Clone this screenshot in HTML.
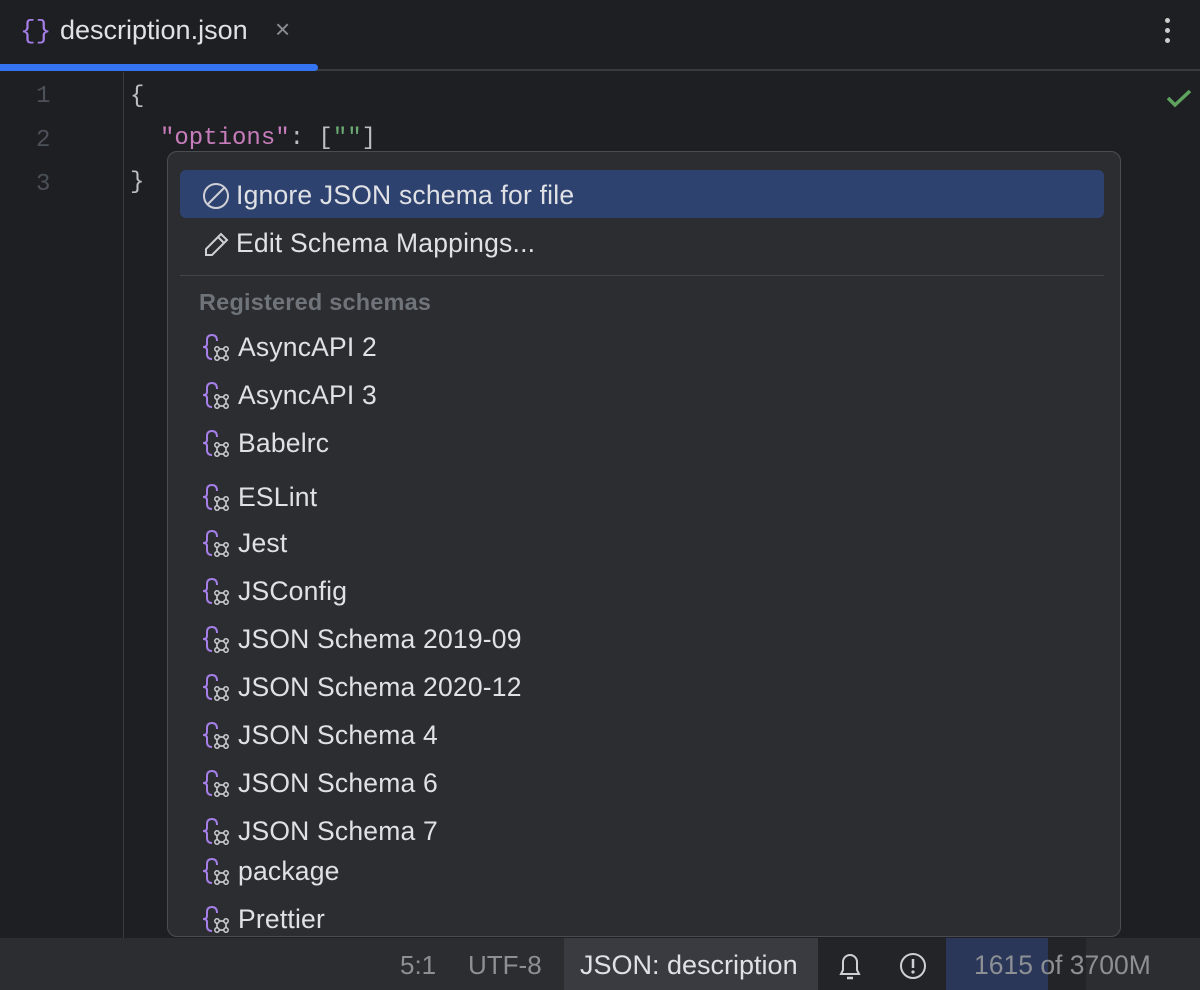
<!DOCTYPE html>
<html><head><meta charset="utf-8"><style>
*{margin:0;padding:0;box-sizing:border-box}
body{width:1200px;height:990px;background:#1e1f22;position:relative;overflow:hidden;font-family:"Liberation Sans",sans-serif;color:#dfe1e5}
.abs{position:absolute}
.mono{font-family:"Liberation Mono",monospace;font-size:24px}
.ln{left:36px;color:#4b5059}
.pop{left:167px;top:151px;width:954px;height:786px;background:#2b2d30;border:1px solid #4a4c51;border-radius:10px;overflow:hidden}
.item{position:absolute;left:0;font-size:26.5px;color:#dfe1e5;white-space:nowrap;line-height:30px;letter-spacing:0.2px}
.item svg{position:absolute;left:34px;top:2px}
.item span{position:absolute;left:70px}
</style></head><body>
<div class="abs" style="left:0;top:0;width:1200px;height:71px;border-bottom:2px solid #393b40"></div>
<div class="abs" style="left:0;top:64px;width:318px;height:7px;background:#3574f0;border-radius:0 4px 4px 0"></div>
<div class="abs" style="left:20px;top:16px;font-size:26px;color:#a57ee8;font-family:'Liberation Mono',monospace">{}</div>
<div class="abs" style="left:60px;top:15px;font-size:27px;color:#dfe1e5">description.json</div>
<div class="abs" style="left:275px;top:14px;font-size:26px;color:#8a8d93">×</div>
<div class="abs" style="left:1165px;top:18px;width:5px;height:5px;border-radius:50%;background:#ccc;box-shadow:0 10px 0 #ccc,0 20px 0 #ccc"></div>
<svg class="abs" style="left:1166px;top:88px" width="26" height="20"><path d="M2 10 L9 17 L24 3" stroke="#5fa35f" stroke-width="3.5" fill="none"/></svg>
<div class="abs" style="left:123px;top:72px;width:1px;height:866px;background:#393b40"></div>
<div class="abs mono ln" style="top:83px">1</div>
<div class="abs mono ln" style="top:127px">2</div>
<div class="abs mono ln" style="top:171px">3</div>
<div class="abs mono" style="left:130px;top:83px;color:#bcbec4">{</div>
<div class="abs mono" style="left:160px;top:125px;color:#bcbec4"><span style="color:#c77dbb">"options"</span>: [<span style="color:#6aab73">""</span>]</div>
<div class="abs mono" style="left:130px;top:169px;color:#bcbec4">}</div>

<div class="abs pop">
<div class="abs" style="left:12px;top:18px;width:924px;height:48px;background:#2e4270;border-radius:6px"></div>
<div class="item" style="top:28px"><svg width="28" height="28"><circle cx="14" cy="14" r="12" stroke="#ced0d6" stroke-width="2" fill="none"/><path d="M6 22 L22 6" stroke="#ced0d6" stroke-width="2"/></svg><span style="left:68px">Ignore JSON schema for file</span></div>
<div class="item" style="top:76px"><svg width="28" height="28"><path d="M4 25 L4 19 L19 4 L25 10 L10 25 Z M16 7 L22 13" stroke="#ced0d6" stroke-width="2" fill="none"/></svg><span style="left:68px">Edit Schema Mappings...</span></div>
<div class="abs" style="left:12px;top:123px;width:924px;height:1px;background:#43454a"></div>
<div class="item" style="top:135px;left:31px;font-size:23.5px;font-weight:bold;color:#6f737a">Registered schemas</div>
<div id="list"></div>
</div>

<div class="abs" style="left:0;top:938px;width:1200px;height:52px;background:#2b2d30"></div>
<div class="abs" style="left:564px;top:938px;width:254px;height:52px;background:#393b40"></div>
<div class="abs" style="left:818px;top:938px;width:128px;height:52px;background:#232427"></div>
<div class="abs" style="left:946px;top:938px;width:102px;height:52px;background:#2b3759"></div>
<div class="abs" style="left:1048px;top:938px;width:38px;height:52px;background:#232427"></div>
<div class="abs" style="left:400px;top:950px;font-size:26px;color:#8c8f94">5:1</div>
<div class="abs" style="left:468px;top:950px;font-size:26px;color:#8c8f94">UTF-8</div>
<div class="abs" style="left:580px;top:950px;font-size:27px;color:#dfe1e5">JSON: description</div>
<svg class="abs" style="left:836px;top:950px" width="28" height="32"><path d="M5 24 L23 24 L21 20 L21 12 A7 7 0 0 0 7 12 L7 20 Z" stroke="#ced0d6" stroke-width="2" fill="none"/><path d="M11 28 L17 28" stroke="#ced0d6" stroke-width="2.5"/></svg>
<svg class="abs" style="left:898px;top:951px" width="30" height="30"><circle cx="15" cy="15" r="12" stroke="#ced0d6" stroke-width="2" fill="none"/><path d="M15 8 L15 17" stroke="#ced0d6" stroke-width="2.5"/><circle cx="15" cy="21" r="1.6" fill="#ced0d6"/></svg>
<div class="abs" style="left:974px;top:950px;font-size:26.5px;color:#8c8f94">1615 of 3700M</div>
<script>
var n=["AsyncAPI 2","AsyncAPI 3","Babelrc","ESLint","Jest","JSConfig","JSON Schema 2019-09","JSON Schema 2020-12","JSON Schema 4","JSON Schema 6","JSON Schema 7","package","Prettier"];
var c=[347,395,443,497,543,591,639,687,735,783,831,871,919];
var ic='<svg width="32" height="32"><path d="M11 3 Q6 3 6 8 L6 12 Q6 15 2 15 Q6 15 6 18 L6 22 Q6 27 11 27 M11 3 Q16 3 16 9" stroke="#a57ee8" stroke-width="2" fill="none"/><rect x="16" y="17" width="9" height="9" stroke="#ced0d6" stroke-width="1.6" fill="none"/><circle cx="16" cy="17" r="2.2" fill="#2b2d30" stroke="#ced0d6" stroke-width="1.5"/><circle cx="25" cy="17" r="2.2" fill="#2b2d30" stroke="#ced0d6" stroke-width="1.5"/><circle cx="16" cy="26" r="2.2" fill="#2b2d30" stroke="#ced0d6" stroke-width="1.5"/><circle cx="25" cy="26" r="2.2" fill="#2b2d30" stroke="#ced0d6" stroke-width="1.5"/></svg>';
var h='';for(var i=0;i<n.length;i++){h+='<div class="item" style="top:'+(c[i]-151-16)+'px">'+ic.replace('<svg','<svg style="left:33px;top:0"')+'<span>'+n[i]+'</span></div>';}
document.getElementById('list').innerHTML=h;
</script>
</body></html>
